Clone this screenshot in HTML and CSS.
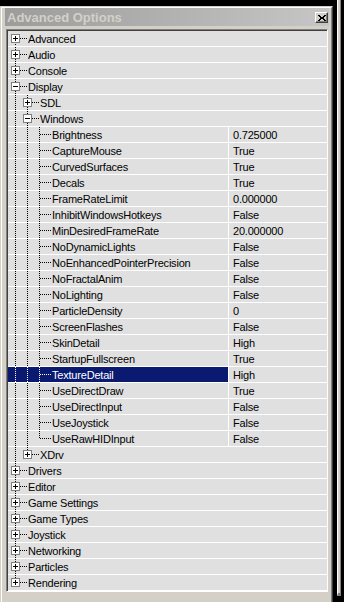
FILE: index.html
```html
<!DOCTYPE html>
<html lang="en">
<head>
    <meta charset="UTF-8">
    <title>Advanced Options</title>
    <link rel="stylesheet" href="styles.css">
</head>
<body>
    <svg class="defs">
        <symbol id="p" viewBox="0 0 9 9">
            <rect x=".5" y=".5" width="8" height="8" fill="#fff" stroke="#808080"/>
            <path d="M2 4.5h5M4.5 2v5" stroke="#000"/>
        </symbol>
        <symbol id="m" viewBox="0 0 9 9">
            <rect x=".5" y=".5" width="8" height="8" fill="#fff" stroke="#808080"/>
            <path d="M2 4.5h5" stroke="#000"/>
        </symbol>
    </svg>
    <div class="screen">
        <div class="win">
            <div class="frame">
                <div class="title">
                    <span class="title-text">Advanced Options</span>
                    <div class="close">
                        <svg width="8" height="6" shape-rendering="crispEdges"><path d="M0 0h2v1H0zM6 0h2v1H6zM1 1h2v1H1zM5 1h2v1H5zM2 2h4v2H2zM1 4h2v1H1zM5 4h2v1H5zM0 5h2v1H0zM6 5h2v1H6z" fill="#000"/></svg>
                    </div>
                </div>
                <div class="tree">
                    <div class="tree-in">
                        <div class="row"><div class="lab"><span class="g own frst"><svg width="9" height="9"><use href="#p"/></svg></span>Advanced</div></div>
                        <div class="row"><div class="lab"><span class="g own tee"><svg width="9" height="9"><use href="#p"/></svg></span>Audio</div></div>
                        <div class="row"><div class="lab"><span class="g own tee"><svg width="9" height="9"><use href="#p"/></svg></span>Console</div></div>
                        <div class="row"><div class="lab"><span class="g own tee"><svg width="9" height="9"><use href="#m"/></svg></span>Display</div></div>
                        <div class="row"><div class="lab"><span class="g pipe"></span><span class="g own tee"><svg width="9" height="9"><use href="#p"/></svg></span>SDL</div></div>
                        <div class="row"><div class="lab"><span class="g pipe"></span><span class="g own tee"><svg width="9" height="9"><use href="#m"/></svg></span>Windows</div></div>

                        <div class="row"><div class="lab leaf"><span class="g pipe"></span><span class="g pipe"></span><span class="g own tee"></span>Brightness</div><div class="val">0.725000</div></div>
                        <div class="row"><div class="lab leaf"><span class="g pipe"></span><span class="g pipe"></span><span class="g own tee"></span>CaptureMouse</div><div class="val">True</div></div>
                        <div class="row"><div class="lab leaf"><span class="g pipe"></span><span class="g pipe"></span><span class="g own tee"></span>CurvedSurfaces</div><div class="val">True</div></div>
                        <div class="row"><div class="lab leaf"><span class="g pipe"></span><span class="g pipe"></span><span class="g own tee"></span>Decals</div><div class="val">True</div></div>
                        <div class="row"><div class="lab leaf"><span class="g pipe"></span><span class="g pipe"></span><span class="g own tee"></span>FrameRateLimit</div><div class="val">0.000000</div></div>
                        <div class="row"><div class="lab leaf"><span class="g pipe"></span><span class="g pipe"></span><span class="g own tee"></span>InhibitWindowsHotkeys</div><div class="val">False</div></div>
                        <div class="row"><div class="lab leaf"><span class="g pipe"></span><span class="g pipe"></span><span class="g own tee"></span>MinDesiredFrameRate</div><div class="val">20.000000</div></div>
                        <div class="row"><div class="lab leaf"><span class="g pipe"></span><span class="g pipe"></span><span class="g own tee"></span>NoDynamicLights</div><div class="val">False</div></div>
                        <div class="row"><div class="lab leaf"><span class="g pipe"></span><span class="g pipe"></span><span class="g own tee"></span>NoEnhancedPointerPrecision</div><div class="val">False</div></div>
                        <div class="row"><div class="lab leaf"><span class="g pipe"></span><span class="g pipe"></span><span class="g own tee"></span>NoFractalAnim</div><div class="val">False</div></div>
                        <div class="row"><div class="lab leaf"><span class="g pipe"></span><span class="g pipe"></span><span class="g own tee"></span>NoLighting</div><div class="val">False</div></div>
                        <div class="row"><div class="lab leaf"><span class="g pipe"></span><span class="g pipe"></span><span class="g own tee"></span>ParticleDensity</div><div class="val">0</div></div>
                        <div class="row"><div class="lab leaf"><span class="g pipe"></span><span class="g pipe"></span><span class="g own tee"></span>ScreenFlashes</div><div class="val">False</div></div>
                        <div class="row"><div class="lab leaf"><span class="g pipe"></span><span class="g pipe"></span><span class="g own tee"></span>SkinDetail</div><div class="val">High</div></div>
                        <div class="row"><div class="lab leaf"><span class="g pipe"></span><span class="g pipe"></span><span class="g own tee"></span>StartupFullscreen</div><div class="val">True</div></div>
                        <div class="row sel"><div class="lab leaf"><span class="g pipe"></span><span class="g pipe"></span><span class="g own tee"></span>TextureDetail</div><div class="val">High</div></div>
                        <div class="row"><div class="lab leaf"><span class="g pipe"></span><span class="g pipe"></span><span class="g own tee"></span>UseDirectDraw</div><div class="val">True</div></div>
                        <div class="row"><div class="lab leaf"><span class="g pipe"></span><span class="g pipe"></span><span class="g own tee"></span>UseDirectInput</div><div class="val">False</div></div>
                        <div class="row"><div class="lab leaf"><span class="g pipe"></span><span class="g pipe"></span><span class="g own tee"></span>UseJoystick</div><div class="val">False</div></div>
                        <div class="row"><div class="lab leaf"><span class="g pipe"></span><span class="g pipe"></span><span class="g own ell"></span>UseRawHIDInput</div><div class="val">False</div></div>

                        <div class="row"><div class="lab"><span class="g pipe"></span><span class="g own ell"><svg width="9" height="9"><use href="#p"/></svg></span>XDrv</div></div>
                        <div class="row"><div class="lab"><span class="g own tee"><svg width="9" height="9"><use href="#p"/></svg></span>Drivers</div></div>
                        <div class="row"><div class="lab"><span class="g own tee"><svg width="9" height="9"><use href="#p"/></svg></span>Editor</div></div>
                        <div class="row"><div class="lab"><span class="g own tee"><svg width="9" height="9"><use href="#p"/></svg></span>Game Settings</div></div>
                        <div class="row"><div class="lab"><span class="g own tee"><svg width="9" height="9"><use href="#p"/></svg></span>Game Types</div></div>
                        <div class="row"><div class="lab"><span class="g own tee"><svg width="9" height="9"><use href="#p"/></svg></span>Joystick</div></div>
                        <div class="row"><div class="lab"><span class="g own tee"><svg width="9" height="9"><use href="#p"/></svg></span>Networking</div></div>
                        <div class="row"><div class="lab"><span class="g own tee"><svg width="9" height="9"><use href="#p"/></svg></span>Particles</div></div>
                        <div class="row"><div class="lab"><span class="g own ell"><svg width="9" height="9"><use href="#p"/></svg></span>Rendering</div></div>
                    </div>
                </div>
            </div>
        </div>
        <div class="strip"></div>
    </div>
</body>
</html>
```

FILE: styles.css
```css
body {
    margin: 0;
    background: #000;
    font-family: "Liberation Sans", Arial, sans-serif;
    font-size: 11px;
}

.defs {
    display: none;
}

.screen {
    display: flex;
    align-items: flex-start;
    height: 602px;
    overflow: hidden;
}

/* window frame */
.win {
    width: 333px;
    flex: none;
    box-sizing: border-box;
    margin-top: 6px;
    border: 1px solid;
    border-color: #d4d0c8 #404040 transparent #d4d0c8;
    border-bottom: 0;
    background: #d4d0c8;
}

.frame {
    border-top: 1px solid #fff;
    border-left: 1px solid #fff;
    border-right: 1px solid #808080;
    padding: 0 2px 20px 3px;
}

.title {
    display: flex;
    align-items: flex-start;
    height: 18px;
    padding: 0 1px 0 2px;
    background: linear-gradient(to right, #9c9c9c, #c6c6c6);
    color: #d4d0c8;
    font-size: 13px;
    font-weight: bold;
}

.title-text {
    flex: 1;
    line-height: 20px;
    height: 18px;
}

.close {
    width: 13px;
    height: 11px;
    margin-top: 4px;
    box-sizing: border-box;
    display: flex;
    align-items: center;
    justify-content: center;
    background: #d4d0c8;
    border: 1px solid;
    border-color: #fff #404040 #404040 #fff;
    box-shadow: inset -1px -1px #808080;
}

/* tree view */
.tree {
    margin: 3px 1px 0 1px;
    border: 1px solid;
    border-color: #808080 #fff #fff #808080;
    background: #e0e0e0;
}

.tree-in {
    border-top: 1px solid #404040;
    border-left: 1px solid #404040;
}

.row {
    display: flex;
    height: 15px;
    line-height: 17px;
    border-bottom: 1px solid #fff;
    color: #000;
    letter-spacing: -0.2px;
}

.lab {
    flex: 1;
    display: flex;
    padding-left: 1px;
    white-space: nowrap;
}

.lab.leaf {
    flex: none;
    width: 219px;
}

.val {
    flex: 1;
    padding-left: 4px;
    border-left: 1px solid #fff;
}

.sel .lab {
    background: #0a1a70;
    color: #fff;
}

/* dotted guide lines */
.g {
    flex: none;
    width: 12px;
    height: 15px;
    background-repeat: no-repeat;
}

.g.own {
    width: 19px;
}

.g svg {
    display: block;
    margin: 3px 0 0 2px;
}

.pipe {
    background-image: repeating-linear-gradient(to bottom, currentColor 0 1px, transparent 1px 2px);
    background-size: 1px 15px;
    background-position: 6px 0;
}

.tee,
.ell,
.frst {
    background-image:
        repeating-linear-gradient(to bottom, currentColor 0 1px, transparent 1px 2px),
        repeating-linear-gradient(to right, currentColor 0 1px, transparent 1px 2px);
    background-position: 6px 0, 7px 7px;
    background-size: 1px 15px, 11px 1px;
}

.ell {
    background-size: 1px 8px, 11px 1px;
}

.frst {
    background-position: 6px 7px, 7px 7px;
    background-size: 1px 8px, 11px 1px;
}

/* strip of the window behind */
.strip {
    width: 4px;
    height: 596px;
    margin-left: 4px;
    box-sizing: border-box;
    background: #d4d0c8;
    border-left: 1px solid #fff;
    border-right: 1px solid #808080;
    border-bottom: 3px solid #808080;
}
```
